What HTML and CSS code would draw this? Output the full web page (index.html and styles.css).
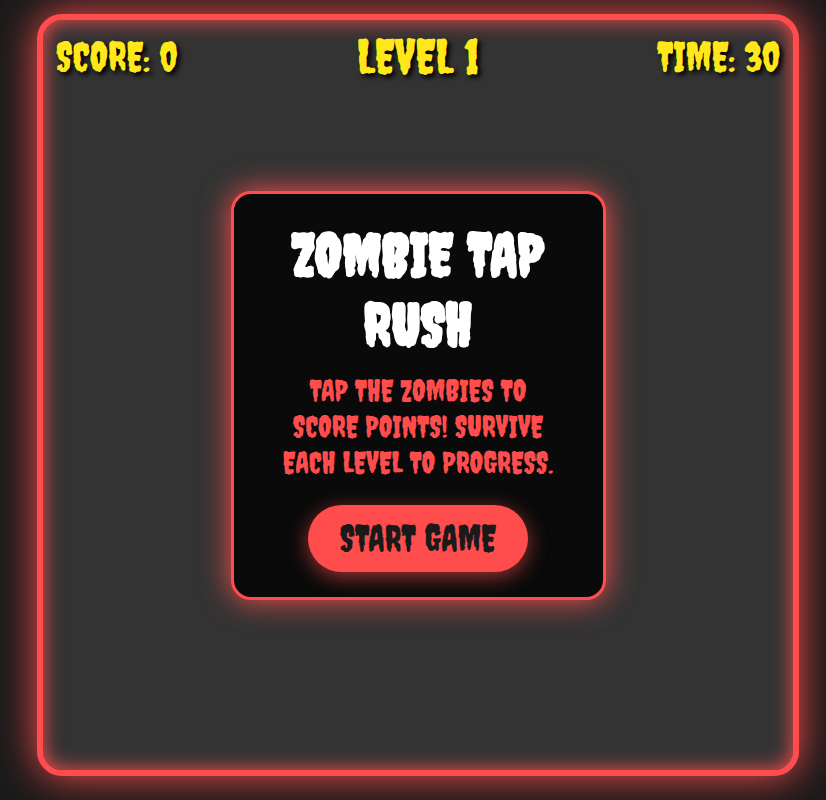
FILE: index.html
```html
<!DOCTYPE html>
<html lang="en">
<head>
    <meta charset="UTF-8">
    <meta name="viewport" content="width=device-width, initial-scale=1.0">
    <title>Zombie Tap Rush</title>
    <link rel="stylesheet" href="styles.css">
</head>
<body>
    <main class="game">
        <header class="hud">
            <div class="score">SCORE: <span id="score">0</span></div>
            <div class="level">LEVEL <span id="level">1</span></div>
            <div class="time">TIME: <span id="time">30</span></div>
        </header>

        <div class="stage">
            <section class="start-screen">
                <h1>ZOMBIE TAP RUSH</h1>
                <p>TAP THE ZOMBIES TO SCORE POINTS! SURVIVE EACH LEVEL TO PROGRESS.</p>
                <button type="button" class="start-btn">START GAME</button>
            </section>
        </div>
    </main>
</body>
</html>
```
FILE: styles.css
```css
* {
    box-sizing: border-box;
}

body {
    margin: 0;
    padding: 14px 27px 24px 37px;
    background: #1a1a1a;
    font-family: Creepster, "Liberation Sans", sans-serif;
}

.game {
    display: flex;
    flex-direction: column;
    max-width: 800px;
    aspect-ratio: 1;
    margin: 0 auto;
    background: #333;
    border: 6px solid #ff4d4d;
    border-radius: 25px;
    box-shadow: 0 0 40px #ff4d4d, inset 0 0 20px #ff4d4d;
}

/* top bar */
.hud {
    display: grid;
    grid-template-columns: 1fr auto 1fr;
    align-items: center;
    height: 72px;
    padding: 0 13px;
    color: #ffe81a;
    font-size: 40px;
    text-shadow: 3px 3px 5px #000;
}

.level {
    font-size: 48px;
}

.time {
    text-align: right;
}

.stage {
    flex: 1;
    display: flex;
    align-items: center;
    justify-content: center;
    padding-bottom: 72px;
}

/* start screen */
.start-screen {
    width: 50%;
    padding: 25px 45px;
    text-align: center;
    background: #0a0a0a;
    border: 3px solid #ff4d4d;
    border-radius: 20px;
    box-shadow: 0 0 30px #ff4d4d;
}

.start-screen h1 {
    margin: 0 0 13px;
    color: #fff;
    font-size: 60px;
    line-height: 70px;
}

.start-screen p {
    margin: 0 0 25px;
    color: #ff4d4d;
    font-size: 30px;
    line-height: 36px;
}

.start-btn {
    padding: 0 32px;
    border: none;
    border-radius: 50px;
    background: #ff4d4d;
    color: #1a1a1a;
    font-family: inherit;
    font-size: 36px;
    line-height: 67px;
    cursor: pointer;
    box-shadow: 0 5px 20px rgba(255, 77, 77, 0.6);
}
```
